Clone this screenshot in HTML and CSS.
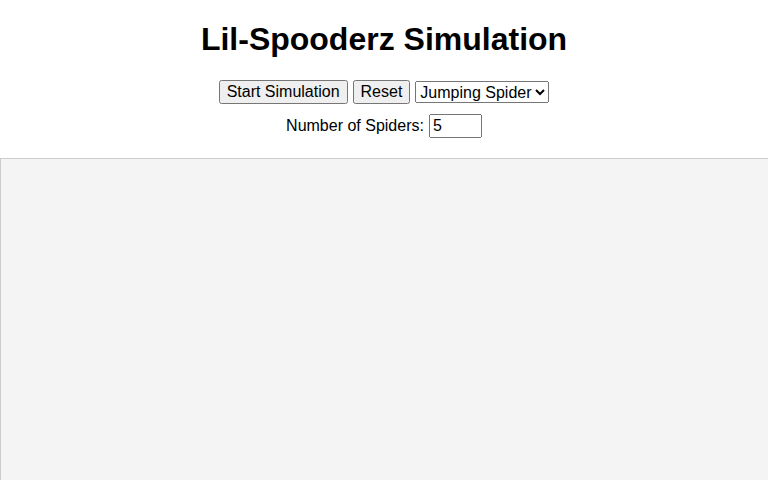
FILE: index.html
```html
<!DOCTYPE html>
<html lang="en">
<head>
    <meta charset="UTF-8">
    <meta name="viewport" content="width=device-width, initial-scale=1.0">
    <title>Lil-Spooderz Simulation</title>
    <link rel="stylesheet" href="styles.css">
</head>
<body>
    <h1>Lil-Spooderz Simulation</h1>
    <div class="controls">
        <div class="control-row">
            <button id="start">Start Simulation</button>
            <button id="reset">Reset</button>
            <select id="species">
                <option value="jumping">Jumping Spider</option>
                <option value="wolf">Wolf Spider</option>
                <option value="orb">Orb Weaver</option>
            </select>
        </div>
        <div class="control-row">
            <label for="count">Number of Spiders:</label>
            <input type="number" id="count" value="5" min="1" max="50">
        </div>
    </div>
    <canvas id="arena" class="arena"></canvas>
</body>
</html>
```

FILE: styles.css
```css
body {
    font-family: 'Liberation Sans', Arial, sans-serif;
    margin: 0;
    padding: 0;
    background-color: #fff;
    text-align: center;
    overflow: hidden; /* Canvas is wider than the window */
}

h1 {
    font-size: 32px;
    margin: 21px 0 22px;
}

.controls {
    display: flex;
    flex-direction: column;
    align-items: center;
    gap: 10px;
    margin-bottom: 20px;
}

.control-row {
    display: flex;
    align-items: center;
    gap: 5px;
    font-size: 16px;
}

button, select, input {
    font-family: 'Liberation Sans', Arial, sans-serif;
    font-size: 16px;
}

button {
    padding: 1px 6px;
    height: 24px;
}

select {
    height: 22px;
}

input {
    width: 45px;
    height: 18px;
    padding: 1px 2px;
}

.arena {
    display: block;
    width: 100%;
    height: 400px;
    background-color: #f4f4f4;
    border: 1px solid #ccc;
}
```
